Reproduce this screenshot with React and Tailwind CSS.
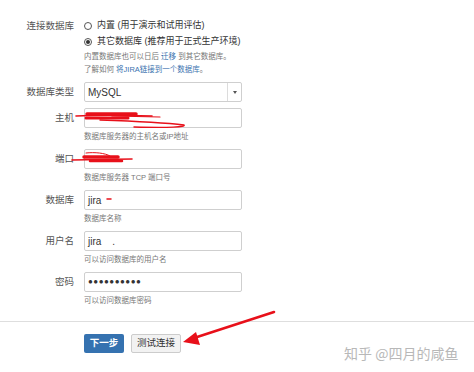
import React from "react";

const Field = ({ label, children, help }) => {
  return (
    <div className="flex">
      <div className="w-[74px] h-[20px] flex items-center justify-end text-[9.5px] text-[#555]">{label}</div>
      <div className="ml-[10px]">
        {children}
        {help && <p className="mt-[2px] leading-[13px] text-[7.5px] text-[#777]">{help}</p>}
      </div>
    </div>
  );
};

const Input = ({ value, dots }) => {
  return (
    <div className="w-[158px] h-[20px] border border-[#cfcfcf] rounded-[2px] bg-white flex items-center px-[3px] text-[10px] text-[#333]">
      {dots ? <span className="tracking-[0.5px] text-[8px]">●●●●●●●●●●</span> : value}
    </div>
  );
};

const Radio = ({ checked, text }) => {
  return (
    <div className="flex items-center h-[16px] gap-[5px]">
      <span className="w-[8px] h-[8px] rounded-full border border-[#555] bg-white flex items-center justify-center">
        {checked && <span className="w-[4px] h-[4px] rounded-full bg-[#333]"></span>}
      </span>
      <span className="text-[9px] text-[#333]">{text}</span>
    </div>
  );
};

export default function App() {
  return (
    <div className="relative w-[474px] h-[372px] bg-white overflow-hidden font-['Liberation_Sans','Noto_Sans_CJK_SC',sans-serif]">
      <div className="pt-[18px]">
        {/* ---- connection type ---- */}
        <div className="flex">
          <div className="w-[74px] h-[16px] flex items-center justify-end text-[9.5px] text-[#555]">连接数据库</div>
          <div className="ml-[10px]">
            <Radio text="内置 (用于演示和试用评估)" />
            <Radio checked text="其它数据库 (推荐用于正式生产环境)" />
            <p className="leading-[13px] text-[7.5px] text-[#777]">
              内置数据库也可以日后 <span className="text-[#3b73af]">迁移</span> 到其它数据库。
            </p>
            <p className="leading-[13px] text-[7.5px] text-[#777]">
              了解如何 <span className="text-[#3b73af]">将JIRA链接到一个数据库</span>。
            </p>
          </div>
        </div>

        <div className="mt-[6px]">
          <Field label="数据库类型">
            <div className="w-[158px] h-[20px] border border-[#cfcfcf] rounded-[2px] flex text-[10px] text-[#333]">
              <div className="flex-1 flex items-center px-[3px]">MySQL</div>
              <div className="w-[14px] border-l border-[#dcdcdc] flex items-center justify-center">
                <span className="w-0 h-0 border-l-[2.5px] border-r-[2.5px] border-t-[3px] border-l-transparent border-r-transparent border-t-[#555]"></span>
              </div>
            </div>
          </Field>
        </div>

        <div className="mt-[6px] flex flex-col gap-[6px]">
          <Field label="主机" help="数据库服务器的主机名或IP地址">
            <Input value="" />
          </Field>
          <Field label="端口" help="数据库服务器 TCP 端口号">
            <Input value="" />
          </Field>
          <Field label="数据库" help="数据库名称">
            <Input value="jira" />
          </Field>
          <Field label="用户名" help="可以访问数据库的用户名">
            <Input value={<span>jira<span className="ml-[11px]">.</span></span>} />
          </Field>
          <Field label="密码" help="可以访问数据库密码">
            <Input dots />
          </Field>
        </div>

        <div className="mt-[14px] border-t border-[#dedede]"></div>

        <div className="mt-[12px] ml-[84px] flex gap-[7px]">
          <button className="w-[40px] h-[19px] rounded-[2px] bg-[#3572b0] text-white text-[9.5px] font-bold">下一步</button>
          <button className="w-[50px] h-[19px] rounded-[2px] bg-[#f2f2f2] border border-[#cccccc] text-[#333] text-[9.5px]">测试连接</button>
        </div>
      </div>

      {/* watermark */}
      <div className="absolute left-[344px] top-[343px] text-[14px] leading-[20px] text-[#b8b8b8] font-['Noto_Sans_CJK_SC',sans-serif]">
        知乎 @四月的咸鱼
      </div>

      {/* red marks */}
      <svg className="absolute left-0 top-0" width="474" height="372" viewBox="0 0 474 372" fill="none">
        <g stroke="#e8101a" strokeLinecap="round" strokeLinejoin="round">
          <path d="M76 116 C 95 115, 120 115, 152 116" strokeWidth="1.6" />
          <path d="M87 114 L 136 114" strokeWidth="3.5" />
          <path d="M86 118 L 128 118" strokeWidth="3" />
          <path d="M100 120 C 130 121, 160 122, 184 125 C 186 127, 170 128, 134 127" strokeWidth="1.4" />
          <path d="M112 116 L 160 117" strokeWidth="1.2" />
          <path d="M72 160 L 132 159" strokeWidth="1.6" />
          <path d="M84 157 L 118 157" strokeWidth="3.5" />
          <path d="M90 161 L 122 161" strokeWidth="2.5" />
          <path d="M86 153 C 95 152, 105 153, 110 156" strokeWidth="1" />
          <path d="M107 199 L 111 199" strokeWidth="1.5" />
          <path d="M274 312 L 194 338" strokeWidth="2.6" />
        </g>
        <polygon points="183,342 196,332 200,345" fill="#e8101a" />
      </svg>
    </div>
  );
}
